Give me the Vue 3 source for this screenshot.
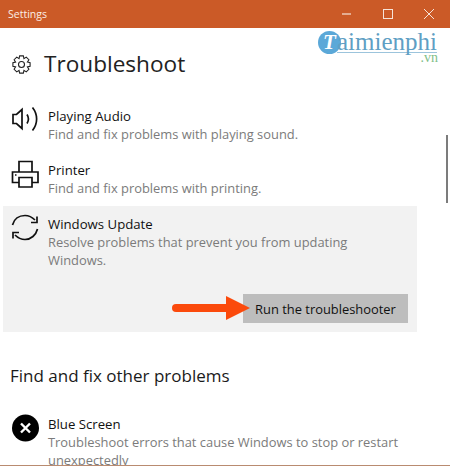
<script setup>
const topItems = [
  { title: 'Playing Audio', desc: 'Find and fix problems with playing sound.', icon: 'audio' },
  { title: 'Printer', desc: 'Find and fix problems with printing.', icon: 'printer' },
]

// 8 tooth outline for the settings gear
function gearPath() {
  const pts = []
  const teeth = 8
  for (let i = 0; i < teeth; i++) {
    const a = (i / teeth) * Math.PI * 2
    const step = (Math.PI * 2) / teeth
    const radii = [[-0.5, 6.4], [-0.27, 8.8], [0.27, 8.8], [0.5, 6.4]]
    for (const [off, r] of radii) {
      const t = a + off * step
      pts.push(`${(9.5 + r * Math.cos(t)).toFixed(2)} ${(9.5 + r * Math.sin(t)).toFixed(2)}`)
    }
  }
  return 'M' + pts.join('L') + 'z'
}
const gear = gearPath()
</script>

<template>
  <div class="window">
    <header class="titlebar">
      <span class="app-name">Settings</span>
      <div class="controls">
        <svg width="12" height="12" viewBox="0 0 12 12"><path d="M2 6h9" stroke="#f6e3d8" stroke-width="1.2" /></svg>
        <svg width="12" height="12" viewBox="0 0 12 12"><rect x="1.5" y="1.5" width="9" height="9" fill="none" stroke="#f6e3d8" stroke-width="1" /></svg>
        <svg width="12" height="12" viewBox="0 0 12 12"><path d="M1 1l10 10M11 1L1 11" stroke="#f6e3d8" stroke-width="1" /></svg>
      </div>
    </header>

    <div class="watermark">
      <span class="logo-t">T</span>
      <span class="logo-name">aimienphi</span>
      <span class="logo-vn">.vn</span>
    </div>

    <main class="content">
      <div class="page-head">
        <svg class="gear" width="19" height="19" viewBox="0 0 19 19" fill="none" stroke="#222" stroke-width="1.1">
          <path :d="gear" />
          <circle cx="9.5" cy="9.5" r="3" />
        </svg>
        <h1>Troubleshoot</h1>
      </div>

      <div class="top-list">
        <div v-for="item in topItems" :key="item.title" class="item">
          <svg v-if="item.icon === 'audio'" class="icon" width="28" height="28" viewBox="0 0 28 28" fill="none" stroke="#111" stroke-width="1.7">
            <path d="M2 8.500h3.500L11 3.500v19l-5.500-5H2z" />
            <path d="M16 8.500c1.800 2.800 1.800 6.200 0 9" />
            <path d="M21.500 1.500c5.500 7 5.500 16 0 23" />
          </svg>
          <svg v-else class="icon" width="28" height="28" viewBox="0 0 28 28" fill="none" stroke="#111" stroke-width="1.7">
            <path d="M8 12V1.500h13V12" />
            <path d="M8 22.500H1.500V12h25.500v10.500H21" />
            <path d="M8 17.500h13V27H8z" />
            <path d="M4 15h1.500" />
          </svg>
          <div class="text">
            <div class="title">{{ item.title }}</div>
            <div class="desc">{{ item.desc }}</div>
          </div>
        </div>
      </div>

      <section class="selected">
        <div class="item">
          <svg class="icon" width="28" height="28" viewBox="0 0 28 28" fill="none" stroke="#111" stroke-width="1.7">
            <path d="M1.500 11C3 5 8 1.500 14 1.500c4 0 7 1.500 10 4.500" />
            <path d="M26 2.500V8.500h-6" />
            <path d="M26.500 15C25 21 20 25.500 14 25.500c-4 0-7-1.500-10-4.500" />
            <path d="M2 24.500V18.500h6" />
          </svg>
          <div class="text">
            <div class="title">Windows Update</div>
            <div class="desc">Resolve problems that prevent you from updating Windows.</div>
          </div>
        </div>
        <div class="actions">
          <div class="run-wrap">
            <svg class="arrow" width="78" height="24" viewBox="0 0 78 24">
              <path d="M4 12h50" stroke="#fb4a0c" stroke-width="8" stroke-linecap="round" />
              <path d="M54 0l24 12-24 12z" fill="#fb4a0c" />
            </svg>
            <button class="run">Run the troubleshooter</button>
          </div>
        </div>
      </section>

      <h2>Find and fix other problems</h2>

      <div class="item">
        <svg class="icon" width="28" height="28" viewBox="0 0 28 28">
          <circle cx="14.500" cy="14" r="13.500" fill="#000" />
          <path d="M10 9.500l9 9M19 9.500l-9 9" stroke="#fff" stroke-width="2.400" />
        </svg>
        <div class="text">
          <div class="title">Blue Screen</div>
          <div class="desc">Troubleshoot errors that cause Windows to stop or restart unexpectedly</div>
        </div>
      </div>
    </main>

    <div class="scrollbar"></div>
    <div class="bottom-line"></div>
  </div>
</template>

<style scoped>
.window {
  position: relative;
  width: 450px;
  height: 466px;
  overflow: hidden;
  background: #fff;
  font-family: "Open Sans", "Liberation Sans", sans-serif;
  color: #1a1a1a;
}

.titlebar {
  height: 28px;
  background: #cb5a27;
  display: flex;
  align-items: center;
  justify-content: space-between;
  padding-left: 8px;
}
.app-name {
  color: #fbeee6;
  font-size: 10.5px;
}
.controls {
  display: flex;
  gap: 29.5px;
  padding-right: 15px;
}

.watermark {
  position: absolute;
  left: 318px;
  top: 30px;
  width: 122px;
  height: 32px;
  font-family: "Liberation Serif", serif;
  color: #5f9fc4;
}
.logo-t {
  position: absolute;
  left: 0;
  top: 1px;
  width: 23px;
  height: 23px;
  border-radius: 50%;
  background: #5ba8d8;
  color: #fff;
  font-size: 21px;
  font-weight: 700;
  line-height: 23px;
  text-align: center;
  font-style: italic;
}
.logo-name {
  position: absolute;
  left: 19px;
  top: 1px;
  font-size: 25px;
  line-height: 21px;
  border-bottom: 1px solid #9cc4dc;
  white-space: nowrap;
}
.logo-vn {
  position: absolute;
  right: 2px;
  top: 24px;
  font-size: 14px;
  line-height: 8px;
  color: #7fc08a;
}

.content {
  padding: 20px 0 0 3px;
}
.page-head {
  display: flex;
  align-items: center;
  gap: 13px;
  padding-left: 9px;
  margin-bottom: 27px;
}
h1 {
  margin: 0;
  font-size: 22.6px;
  font-weight: 400;
  line-height: 32px;
  color: #222;
}
.gear {
  flex: none;
}

.top-list {
  display: flex;
  flex-direction: column;
  gap: 18px;
  margin-bottom: 9px;
}
.item {
  display: flex;
  gap: 9px;
  padding-left: 8px;
}
.icon {
  flex: none;
  margin-top: -1px;
}
.title {
  font-size: 13.2px;
  line-height: 18px;
  color: #111;
}
.desc {
  font-size: 12.9px;
  line-height: 18px;
  color: #7b7b7b;
}

.selected {
  width: 414px;
  height: 126px;
  background: #f2f2f2;
  display: flex;
  flex-direction: column;
  justify-content: space-between;
  padding: 9px 0;
  box-sizing: border-box;
}
.selected .item {
  padding-right: 50px;
}
.actions {
  display: flex;
  justify-content: flex-end;
  padding-right: 9px;
}
.run-wrap {
  position: relative;
}
.arrow {
  position: absolute;
  left: -71px;
  top: 2px;
}
.run {
  display: block;
  width: 165px;
  height: 29px;
  border: none;
  padding: 0;
  background: #bdbdbd;
  color: #111;
  font-family: inherit;
  font-size: 12.9px;
}

h2 {
  margin: 32px 0 27px 7px;
  font-size: 17px;
  font-weight: 400;
  line-height: 24px;
}

.scrollbar {
  position: absolute;
  right: 2px;
  top: 135px;
  width: 2px;
  height: 68px;
  background: #7c7c7c;
}
.bottom-line {
  position: absolute;
  left: 0;
  right: 0;
  bottom: 0;
  height: 1px;
  background: #b98b70;
}
</style>
